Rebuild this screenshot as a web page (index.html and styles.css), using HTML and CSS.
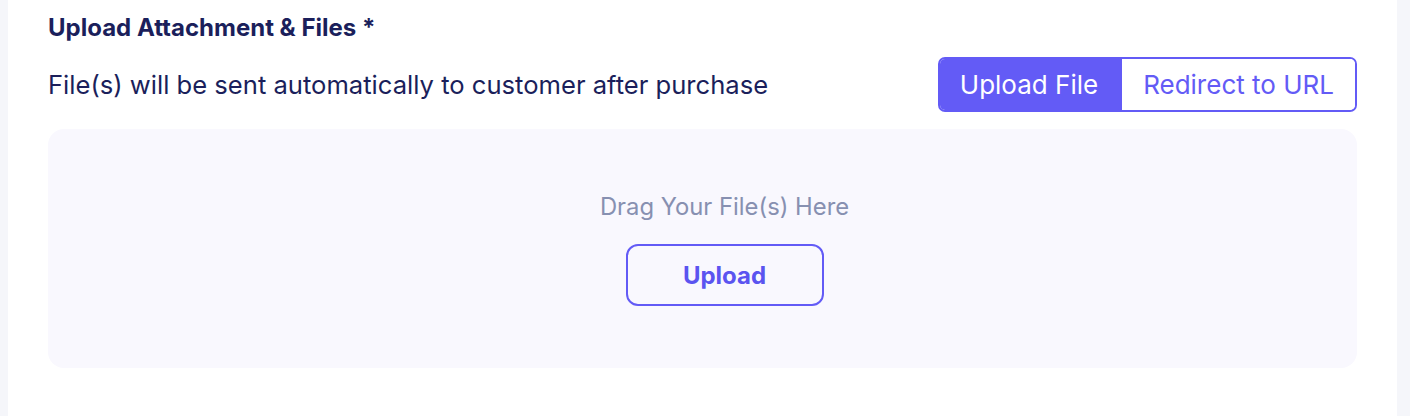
FILE: index.html
```html
<!DOCTYPE html>
<html>
<head>
  <title>Upload Attachment</title>
  <link rel="stylesheet" href="styles.css">
</head>
<body>

  <div class="card">
    <div class="label">Upload Attachment &amp; Files *</div>
    <div class="header-row">
      <div class="hint">File(s) will be sent automatically to customer after purchase</div>
      <div class="toggle">
        <button class="toggle-option active">Upload File</button>
        <button class="toggle-option">Redirect to URL</button>
      </div>
    </div>
    <div class="dropzone">
      <div class="drop-text">Drag Your File(s) Here</div>
      <button class="upload-button">Upload</button>
    </div>
  </div>

</body>
</html>
```

FILE: styles.css
```css
body {
  margin: 0;
  background-color: #f5f6fa;
  font-family: Inter, "Noto Sans", sans-serif;
  height: 416px;
  overflow: hidden;
}

.card {
  margin-left: 8px;
  width: 1389px;
  height: 416px;
  box-sizing: border-box;
  background-color: #fff;
  padding: 14px 40px 0 40px;
}

.label {
  font-size: 24px;
  line-height: 28px;
  font-weight: 700;
  color: #1b1f5b;
}

.header-row {
  display: flex;
  justify-content: space-between;
  align-items: center;
  margin-top: 15px;
  height: 55px;
}

.hint {
  font-size: 25.6px;
  color: #1b1f5b;
}

.toggle {
  display: flex;
  height: 55px;
  border: 2px solid #635bf6;
  border-radius: 7px;
  box-sizing: border-box;
  overflow: hidden;
}

.toggle-option {
  border: none;
  background-color: #fff;
  color: #635bf6;
  font-family: inherit;
  font-size: 26px;
  padding: 0 21px;
  cursor: pointer;
}

.toggle-option.active {
  background-color: #635bf6;
  color: #fff;
  padding: 0 24px 0 20px;
}

.dropzone {
  margin-top: 17px;
  height: 239px;
  box-sizing: border-box;
  background-color: #f9f8fe;
  border-radius: 16px;
  padding: 64px 0 0 44px;
  display: flex;
  flex-direction: column;
  align-items: center;
}

.drop-text {
  font-size: 23.8px;
  line-height: 28px;
  color: #8790b1;
}

.upload-button {
  margin-top: 23px;
  width: 198px;
  height: 62px;
  border: 2px solid #635bf6;
  border-radius: 12px;
  background-color: transparent;
  color: #5b54f0;
  font-family: inherit;
  font-size: 24px;
  font-weight: 700;
  cursor: pointer;
}
```
